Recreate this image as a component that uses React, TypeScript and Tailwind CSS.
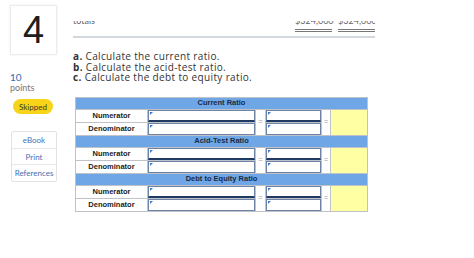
import React from "react";

const sections = ["Current Ratio", "Acid-Test Ratio", "Debt to Equity Ratio"];

function Marker() {
  return (
    <span className="absolute left-[1px] top-[1px] w-0 h-0 border-t-[3px] border-r-[3px] border-t-[#3d78c9] border-r-transparent" />
  );
}

function InputCell({ top }: { top: boolean }) {
  return (
    <div
      className={`relative bg-white border border-[#6d84a6] ${
        top ? "border-b-2 border-b-[#1f3a63]" : ""
      }`}
    >
      <Marker />
    </div>
  );
}

function Section({ title }: { title: string }) {
  return (
    <>
      <div className="col-span-6 bg-[#6ea6e6] flex items-center justify-center text-[7.5px] font-bold text-[#1b2a44]">
        {title}
      </div>
      <div className="bg-white flex items-center justify-center text-[7.5px] font-bold text-[#222]">
        Numerator
      </div>
      <InputCell top />
      <div className="row-span-2 bg-white flex items-center justify-center text-[7px] text-[#999]">
        =
      </div>
      <InputCell top />
      <div className="row-span-2 bg-white flex items-center justify-center text-[7px] text-[#999]">
        =
      </div>
      <div className="row-span-2 bg-[#ffffa4]" />
      <div className="bg-white flex items-center justify-center text-[7.5px] font-bold text-[#222]">
        Denominator
      </div>
      <InputCell top={false} />
      <InputCell top={false} />
    </>
  );
}

export default function App() {
  return (
    <div className="w-[474px] h-[258px] bg-white flex overflow-hidden font-['Lato',sans-serif]">
      <div className="w-[73px] shrink-0 flex flex-col items-start pl-[10px] pt-[5px]">
        <div className="w-[47px] h-[50px] border border-[#ececec] shadow-[0_0_2px_rgba(0,0,0,0.08)] flex items-center justify-center text-[38px] leading-none text-[#1e1e1e] font-['Liberation_Sans',sans-serif]">
          4
        </div>
        <div className="mt-[17px] text-[10px] leading-[11px] text-[#2f6db0]">10</div>
        <div className="text-[9px] leading-[10px] text-[#777]">points</div>
        <div className="mt-[6px] ml-[3px] w-[40px] h-[15px] rounded-full bg-[#f7d417] flex items-center justify-center text-[8px] text-[#3a3a2a]">
          Skipped
        </div>
        <div className="mt-[17px] ml-[1px] w-[46px] border border-[#e3e3e3] rounded-[2px] flex flex-col text-[8px] text-[#3f72b5]">
          <div className="h-[17px] flex items-center justify-center border-b border-[#e8e8e8]">eBook</div>
          <div className="h-[16px] flex items-center justify-center border-b border-[#e8e8e8]">Print</div>
          <div className="h-[16px] flex items-center justify-center">References</div>
        </div>
      </div>

      <div className="flex flex-col w-[302px]">
        <div className="mt-[21px] h-[6px] overflow-hidden flex items-start justify-between">
          <div className="-mt-[5px] text-[9px] leading-[10px] text-[#666]">totals</div>
          <div className="flex gap-[6px] -mt-[5px]">
            <div className="w-[37px] text-center text-[9px] leading-[10px] text-[#666]">$324,000</div>
            <div className="w-[37px] text-center text-[9px] leading-[10px] text-[#666]">$324,000</div>
          </div>
        </div>
        <div className="flex justify-end gap-[6px] mt-[2px]">
          <div className="w-[37px] h-[3px] border-b-[3px] border-double border-[#777]" />
          <div className="w-[37px] h-[3px] border-b-[3px] border-double border-[#777]" />
        </div>
        <div className="mt-[4px] h-[2px] bg-[#d3d7de]" />

        <div className="mt-[13px] text-[10px] leading-[10.5px] tracking-[0.35px] text-[#333] font-['Open_Sans',sans-serif]">
          <div>
            <span className="font-bold">a.</span> Calculate the current ratio.
          </div>
          <div>
            <span className="font-bold">b.</span> Calculate the acid-test ratio.
          </div>
          <div>
            <span className="font-bold">c.</span> Calculate the debt to equity ratio.
          </div>
        </div>

        <div className="mt-[14px] ml-[2px] w-[293px] grid grid-cols-[71px_107px_9px_55px_8px_36px] grid-rows-[11px_12px_12px_11px_12px_12px_11px_12px_12px] gap-px p-px bg-[#bfc3c9] font-['Liberation_Sans',sans-serif]">
          {sections.map((s) => (
            <Section key={s} title={s} />
          ))}
        </div>
      </div>
    </div>
  );
}
